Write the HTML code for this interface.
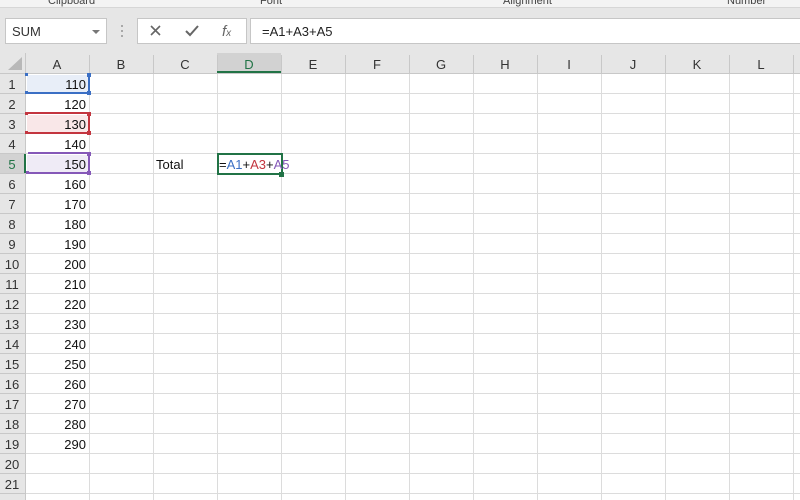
<!DOCTYPE html>
<html><head><meta charset="utf-8"><style>
html,body{margin:0;padding:0;width:800px;height:500px;overflow:hidden;background:#fff}
svg text{font-family:"Liberation Sans",sans-serif}
</style></head><body>
<svg width="800" height="500" xmlns="http://www.w3.org/2000/svg">
<rect x="0" y="0" width="800" height="8" fill="#f3f3f3"/>
<g font-size="11" fill="#444">
<text x="48" y="4">Clipboard</text><text x="260" y="4">Font</text><text x="503" y="4">Alignment</text><text x="727" y="4">Number</text>
</g>
<rect x="0" y="7" width="800" height="1" fill="#d6d6d6"/>
<rect x="0" y="8" width="800" height="45" fill="#e6e6e6"/>
<rect x="5.5" y="18.5" width="101" height="25" fill="#fff" stroke="#c6c6c6"/>
<text x="12" y="36" font-size="13" fill="#333">SUM</text>
<path d="M92 30 L100 30 L96 34 Z" fill="#777"/>
<g fill="#a8a8a8"><rect x="121" y="25" width="2" height="2"/><rect x="121" y="30" width="2" height="2"/><rect x="121" y="35" width="2" height="2"/></g>
<rect x="137.5" y="18.5" width="109" height="25" fill="#fff" stroke="#c6c6c6"/>
<path d="M151 26 L160 35 M160 26 L151 35" stroke="#666" stroke-width="1.6"/>
<path d="M186 31 L190 35 L198 26" stroke="#666" stroke-width="2" fill="none"/>
<text x="222" y="36" font-size="15" font-style="italic" font-family="Liberation Serif,serif" fill="#666">f<tspan font-size="10">x</tspan></text>
<rect x="250.5" y="18.5" width="555" height="25" fill="#fff" stroke="#c6c6c6"/>
<text x="262" y="36" font-size="13" fill="#222">=A1+A3+A5</text>
<rect x="0" y="53" width="800" height="20" fill="#e6e6e6"/>
<rect x="0" y="73" width="25" height="427" fill="#e6e6e6"/>
<rect x="217" y="53" width="64" height="20" fill="#d2d2d2"/>
<rect x="0" y="154" width="25" height="19" fill="#d2d2d2"/>
<path d="M8 70 L22 70 L22 57 Z" fill="#b8b8b8"/>
<g stroke="#c8c8c8" stroke-width="1">
<line x1="0" y1="73.5" x2="800" y2="73.5"/>
<line x1="25.5" y1="53" x2="25.5" y2="500"/>
</g>
<g stroke="#dcdcdc" stroke-width="1">
<line x1="89.5" y1="74" x2="89.5" y2="500"/><line x1="153.5" y1="74" x2="153.5" y2="500"/><line x1="217.5" y1="74" x2="217.5" y2="500"/><line x1="281.5" y1="74" x2="281.5" y2="500"/><line x1="345.5" y1="74" x2="345.5" y2="500"/><line x1="409.5" y1="74" x2="409.5" y2="500"/><line x1="473.5" y1="74" x2="473.5" y2="500"/><line x1="537.5" y1="74" x2="537.5" y2="500"/><line x1="601.5" y1="74" x2="601.5" y2="500"/><line x1="665.5" y1="74" x2="665.5" y2="500"/><line x1="729.5" y1="74" x2="729.5" y2="500"/><line x1="793.5" y1="74" x2="793.5" y2="500"/>
<line x1="26" y1="93.5" x2="800" y2="93.5"/><line x1="26" y1="113.5" x2="800" y2="113.5"/><line x1="26" y1="133.5" x2="800" y2="133.5"/><line x1="26" y1="153.5" x2="800" y2="153.5"/><line x1="26" y1="173.5" x2="800" y2="173.5"/><line x1="26" y1="193.5" x2="800" y2="193.5"/><line x1="26" y1="213.5" x2="800" y2="213.5"/><line x1="26" y1="233.5" x2="800" y2="233.5"/><line x1="26" y1="253.5" x2="800" y2="253.5"/><line x1="26" y1="273.5" x2="800" y2="273.5"/><line x1="26" y1="293.5" x2="800" y2="293.5"/><line x1="26" y1="313.5" x2="800" y2="313.5"/><line x1="26" y1="333.5" x2="800" y2="333.5"/><line x1="26" y1="353.5" x2="800" y2="353.5"/><line x1="26" y1="373.5" x2="800" y2="373.5"/><line x1="26" y1="393.5" x2="800" y2="393.5"/><line x1="26" y1="413.5" x2="800" y2="413.5"/><line x1="26" y1="433.5" x2="800" y2="433.5"/><line x1="26" y1="453.5" x2="800" y2="453.5"/><line x1="26" y1="473.5" x2="800" y2="473.5"/><line x1="26" y1="493.5" x2="800" y2="493.5"/>
</g>
<g stroke="#c8c8c8" stroke-width="1">
<line x1="89.5" y1="55" x2="89.5" y2="73"/><line x1="153.5" y1="55" x2="153.5" y2="73"/><line x1="217.5" y1="55" x2="217.5" y2="73"/><line x1="281.5" y1="55" x2="281.5" y2="73"/><line x1="345.5" y1="55" x2="345.5" y2="73"/><line x1="409.5" y1="55" x2="409.5" y2="73"/><line x1="473.5" y1="55" x2="473.5" y2="73"/><line x1="537.5" y1="55" x2="537.5" y2="73"/><line x1="601.5" y1="55" x2="601.5" y2="73"/><line x1="665.5" y1="55" x2="665.5" y2="73"/><line x1="729.5" y1="55" x2="729.5" y2="73"/><line x1="793.5" y1="55" x2="793.5" y2="73"/>
<line x1="0" y1="93.5" x2="25" y2="93.5"/><line x1="0" y1="113.5" x2="25" y2="113.5"/><line x1="0" y1="133.5" x2="25" y2="133.5"/><line x1="0" y1="153.5" x2="25" y2="153.5"/><line x1="0" y1="173.5" x2="25" y2="173.5"/><line x1="0" y1="193.5" x2="25" y2="193.5"/><line x1="0" y1="213.5" x2="25" y2="213.5"/><line x1="0" y1="233.5" x2="25" y2="233.5"/><line x1="0" y1="253.5" x2="25" y2="253.5"/><line x1="0" y1="273.5" x2="25" y2="273.5"/><line x1="0" y1="293.5" x2="25" y2="293.5"/><line x1="0" y1="313.5" x2="25" y2="313.5"/><line x1="0" y1="333.5" x2="25" y2="333.5"/><line x1="0" y1="353.5" x2="25" y2="353.5"/><line x1="0" y1="373.5" x2="25" y2="373.5"/><line x1="0" y1="393.5" x2="25" y2="393.5"/><line x1="0" y1="413.5" x2="25" y2="413.5"/><line x1="0" y1="433.5" x2="25" y2="433.5"/><line x1="0" y1="453.5" x2="25" y2="453.5"/><line x1="0" y1="473.5" x2="25" y2="473.5"/><line x1="0" y1="493.5" x2="25" y2="493.5"/>
</g>
<rect x="217" y="71" width="64" height="2" fill="#217346"/>
<rect x="24" y="154" width="2" height="19" fill="#217346"/>
<g font-size="13" fill="#333" text-anchor="middle">
<text x="57" y="69">A</text><text x="121" y="69">B</text><text x="185" y="69">C</text><text x="249" y="69" fill="#217346">D</text><text x="313" y="69">E</text><text x="377" y="69">F</text><text x="441" y="69">G</text><text x="505" y="69">H</text><text x="569" y="69">I</text><text x="633" y="69">J</text><text x="697" y="69">K</text><text x="761" y="69">L</text>
</g>
<g font-size="13" fill="#333" text-anchor="middle">
<text x="12" y="89">1</text><text x="12" y="109">2</text><text x="12" y="129">3</text><text x="12" y="149">4</text><text x="12" y="169" fill="#217346">5</text><text x="12" y="189">6</text><text x="12" y="209">7</text><text x="12" y="229">8</text><text x="12" y="249">9</text><text x="12" y="269">10</text><text x="12" y="289">11</text><text x="12" y="309">12</text><text x="12" y="329">13</text><text x="12" y="349">14</text><text x="12" y="369">15</text><text x="12" y="389">16</text><text x="12" y="409">17</text><text x="12" y="429">18</text><text x="12" y="449">19</text><text x="12" y="469">20</text><text x="12" y="489">21</text>
</g>
<rect x="27" y="75" width="61" height="18" fill="#e8eef8"/>
<rect x="27" y="115" width="61" height="18" fill="#f9e7e8"/>
<rect x="27" y="155" width="61" height="18" fill="#efebf6"/>
<g fill="none" stroke-width="2">
<path d="M28 93 H87 M89 76 V91" stroke="#3b6fc4"/>
<path d="M28 113 H87 M28 133 H87 M89 116 V131" stroke="#c3353f"/>
<path d="M28 153 H87 M28 173 H87 M89 156 V171" stroke="#8558b8"/>
</g>
<g>
<rect x="25" y="73" width="3" height="3" fill="#3b6fc4"/><rect x="87" y="73" width="4" height="4" fill="#3b6fc4"/><rect x="25" y="91" width="3" height="3" fill="#3b6fc4"/><rect x="87" y="91" width="4" height="4" fill="#3b6fc4"/>
<rect x="25" y="112" width="3" height="3" fill="#c3353f"/><rect x="87" y="112" width="4" height="4" fill="#c3353f"/><rect x="25" y="131" width="3" height="3" fill="#c3353f"/><rect x="87" y="131" width="4" height="4" fill="#c3353f"/>
<rect x="87" y="152" width="4" height="4" fill="#8558b8"/><rect x="87" y="171" width="4" height="4" fill="#8558b8"/><rect x="26" y="171" width="3" height="3" fill="#8558b8"/>
</g>
<g font-size="13" fill="#111" text-anchor="end">
<text x="86" y="89">110</text><text x="86" y="109">120</text><text x="86" y="129">130</text><text x="86" y="149">140</text><text x="86" y="169">150</text><text x="86" y="189">160</text><text x="86" y="209">170</text><text x="86" y="229">180</text><text x="86" y="249">190</text><text x="86" y="269">200</text><text x="86" y="289">210</text><text x="86" y="309">220</text><text x="86" y="329">230</text><text x="86" y="349">240</text><text x="86" y="369">250</text><text x="86" y="389">260</text><text x="86" y="409">270</text><text x="86" y="429">280</text><text x="86" y="449">290</text>
</g>
<text x="156" y="169" font-size="13" fill="#111">Total</text>
<rect x="217" y="154" width="65" height="20" fill="#fff"/>
<rect x="218" y="154" width="64" height="20" fill="none" stroke="#217346" stroke-width="2"/>
<rect x="279" y="172" width="5" height="5" fill="#217346"/>
<text x="219" y="169" font-size="13" fill="#111">=<tspan fill="#3b6fc4">A1</tspan>+<tspan fill="#c3353f">A3</tspan>+<tspan fill="#8558b8">A5</tspan></text>
</svg>
</body></html>
